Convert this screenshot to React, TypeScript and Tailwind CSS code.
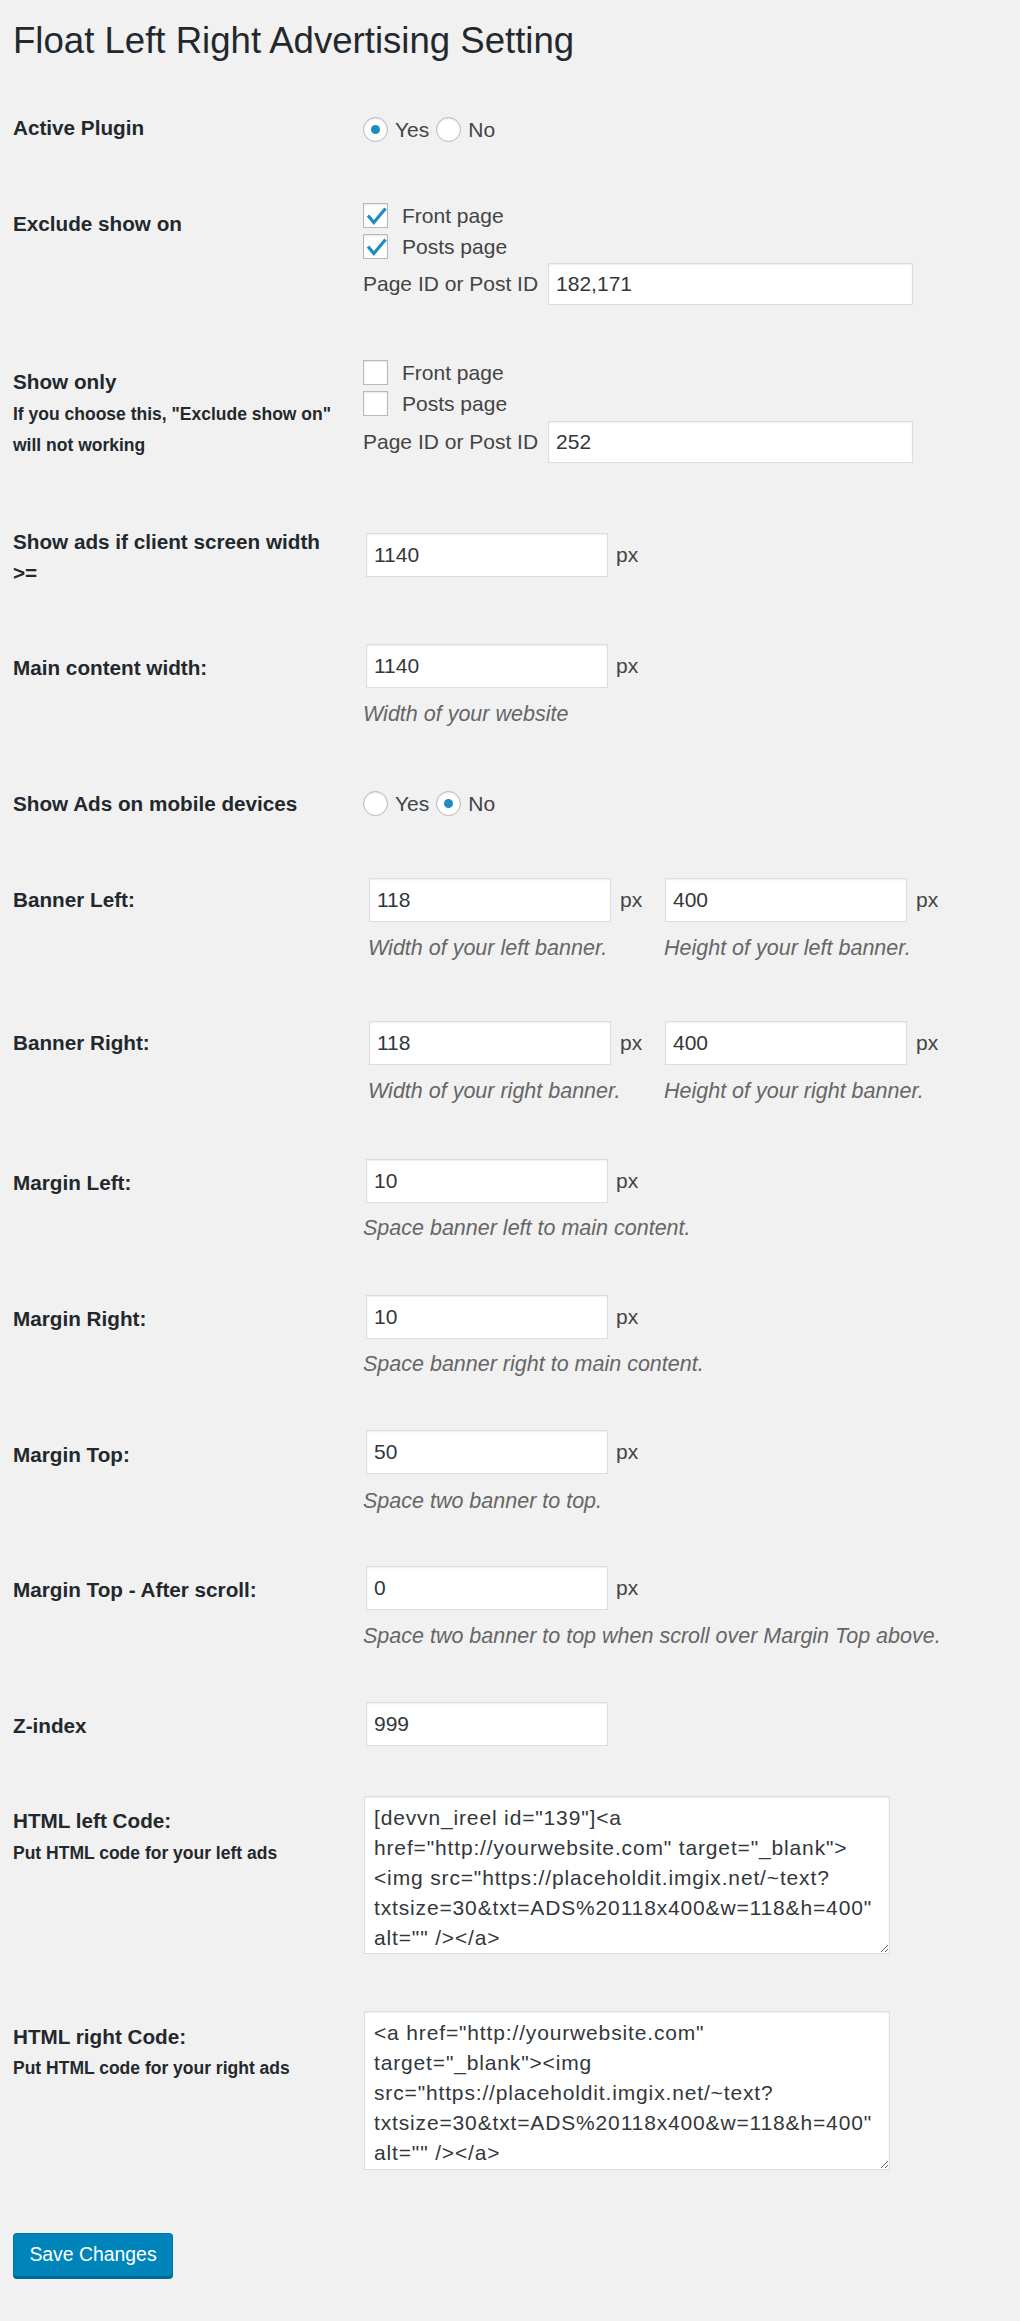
import React from "react";

const inputCls =
  "block h-[44px] w-[242px] border border-[#dddddd] bg-white px-[7px] text-[21px] text-[#32373c] shadow-[inset_0_1px_2px_rgba(0,0,0,0.07)] outline-none";

const wideInputCls =
  "block h-[42px] w-[365px] border border-[#dddddd] bg-white px-[7px] text-[21px] text-[#32373c] shadow-[inset_0_1px_2px_rgba(0,0,0,0.07)] outline-none";

const descCls = "text-[21.5px] italic leading-[31px] text-[#666666]";

function Row({
  h,
  lpt,
  label,
  sub,
  subMt,
  children,
}: {
  h: string;
  lpt: string;
  label: React.ReactNode;
  sub?: React.ReactNode;
  subMt?: string;
  children?: React.ReactNode;
}) {
  return (
    <div className={`flex ${h}`}>
      <div className={`w-[363px] shrink-0 pl-[13px] pr-[25px] ${lpt}`}>
        <div className="text-[20.7px] font-bold leading-[31px] text-[#23282d]">{label}</div>
        {sub ? (
          <div className={`${subMt ?? ""} text-[17.5px] font-bold leading-[31px] text-[#23282d]`}>{sub}</div>
        ) : null}
      </div>
      <div className="min-w-0 flex-1 pt-[22px]">{children}</div>
    </div>
  );
}

function Radio({ checked }: { checked?: boolean }) {
  return (
    <span className="flex h-[25px] w-[25px] shrink-0 items-center justify-center rounded-full border border-[#b4b9be] bg-white shadow-[inset_0_1px_2px_rgba(0,0,0,0.1)]">
      {checked ? <span className="h-[9px] w-[9px] rounded-full bg-[#1e8cbe]" /> : null}
    </span>
  );
}

function Checkbox({ checked }: { checked?: boolean }) {
  return (
    <span className="flex h-[25px] w-[25px] shrink-0 items-center justify-center border border-[#b4b9be] bg-white shadow-[inset_0_1px_2px_rgba(0,0,0,0.1)]">
      {checked ? (
        <svg width="25" height="25" viewBox="0 0 25 25" className="-m-px">
          <path d="M5 12.5 L10.8 19.5 L22.5 5.5" fill="none" stroke="#1e8cbe" strokeWidth="3.2" strokeLinejoin="miter" />
        </svg>
      ) : null}
    </span>
  );
}

function YesNo({ yes }: { yes: boolean }) {
  return (
    <div className="flex h-[31px] items-center text-[21px] text-[#444444]">
      <Radio checked={yes} />
      <span className="ml-[7px]">Yes</span>
      <span className="ml-[7px]">
        <Radio checked={!yes} />
      </span>
      <span className="ml-[7px]">No</span>
    </div>
  );
}

function CheckLine({ checked, text }: { checked?: boolean; text: string }) {
  return (
    <div className="flex h-[31px] items-center text-[21px] text-[#444444]">
      <Checkbox checked={checked} />
      <span className="ml-[14px]">{text}</span>
    </div>
  );
}

function PageIdLine({ value, mt }: { value: string; mt: string }) {
  return (
    <div className={`flex items-center ${mt}`}>
      <span className="text-[21px] text-[#444444]">Page ID or Post ID</span>
      <input className={`ml-[10px] ${wideInputCls}`} defaultValue={value} readOnly />
    </div>
  );
}

function PxInput({ value }: { value: string }) {
  return (
    <div className="ml-[3px] flex items-center">
      <input className={inputCls} defaultValue={value} readOnly />
      <span className="ml-[8px] text-[21px] text-[#444444]">px</span>
    </div>
  );
}

function BannerCol({ value, desc, w }: { value: string; desc: string; w: string }) {
  return (
    <div className={`${w} shrink-0`}>
      <div className="ml-[1px] flex items-center">
        <input className={inputCls} defaultValue={value} readOnly />
        <span className="ml-[9px] text-[21px] text-[#444444]">px</span>
      </div>
      <div className={`mt-[11px] ${descCls}`}>{desc}</div>
    </div>
  );
}

const textareaCls =
  "ml-[1px] block w-[526px] resize-y overflow-hidden whitespace-pre border border-[#dddddd] bg-white pl-[9px] pr-[6px] pt-[6px] text-[21px] tracking-[0.85px] leading-[30px] text-[#32373c] shadow-[inset_0_1px_2px_rgba(0,0,0,0.07)] outline-none";

const leftCode = `[devvn_ireel id="139"]<a
href="http://yourwebsite.com" target="_blank">
<img src="https://placeholdit.imgix.net/~text?
txtsize=30&txt=ADS%20118x400&w=118&h=400"
alt="" /></a>`;

const rightCode = `<a href="http://yourwebsite.com"
target="_blank"><img
src="https://placeholdit.imgix.net/~text?
txtsize=30&txt=ADS%20118x400&w=118&h=400"
alt="" /></a>`;

export default function App() {
  return (
    <div className="min-h-[2321px] w-full bg-[#f1f1f1] font-['Liberation_Sans',Arial,sans-serif] text-[#444444]">
      <div className="pl-[13px] pt-[19px]">
        <h1 className="h-[43px] text-[36.6px] font-normal leading-[43px] text-[#23282d]">
          Float Left Right Advertising Setting
        </h1>
      </div>

      <div className="mt-[30px]">
        <Row h="h-[86px]" lpt="pt-[20px]" label="Active Plugin">
          <YesNo yes={true} />
        </Row>

        <Row h="h-[157px]" lpt="pt-[30px]" label="Exclude show on">
          <CheckLine checked text="Front page" />
          <CheckLine checked text="Posts page" />
          <PageIdLine value="182,171" mt="mt-[1px]" />
        </Row>

        <Row
          h="h-[176px]"
          lpt="pt-[31px]"
          label="Show only"
          sub={<>If you choose this, &quot;Exclude show on&quot; will not working</>}
          subMt="mt-[2px]"
        >
          <CheckLine text="Front page" />
          <CheckLine text="Posts page" />
          <PageIdLine value="252" mt="mt-[2px]" />
        </Row>

        <Row h="h-[111px]" lpt="pt-[15px]" label="Show ads if client screen width >=">
          <PxInput value="1140" />
        </Row>

        <Row h="h-[144px]" lpt="pt-[30px]" label="Main content width:">
          <PxInput value="1140" />
          <div className={`mt-[11px] ${descCls}`}>Width of your website</div>
        </Row>

        <Row h="h-[90px]" lpt="pt-[22px]" label="Show Ads on mobile devices">
          <YesNo yes={false} />
        </Row>

        <Row h="h-[143px]" lpt="pt-[28px]" label="Banner Left:">
          <div className="ml-[5px] flex">
            <BannerCol w="w-[296px]" value="118" desc="Width of your left banner." />
            <BannerCol w="w-[300px]" value="400" desc="Height of your left banner." />
          </div>
        </Row>

        <Row h="h-[138px]" lpt="pt-[28px]" label="Banner Right:">
          <div className="ml-[5px] flex">
            <BannerCol w="w-[296px]" value="118" desc="Width of your right banner." />
            <BannerCol w="w-[300px]" value="400" desc="Height of your right banner." />
          </div>
        </Row>

        <Row h="h-[136px]" lpt="pt-[30px]" label="Margin Left:">
          <PxInput value="10" />
          <div className={`mt-[10px] ${descCls}`}>Space banner left to main content.</div>
        </Row>

        <Row h="h-[135px]" lpt="pt-[30px]" label="Margin Right:">
          <PxInput value="10" />
          <div className={`mt-[10px] ${descCls}`}>Space banner right to main content.</div>
        </Row>

        <Row h="h-[136px]" lpt="pt-[31px]" label="Margin Top:">
          <PxInput value="50" />
          <div className={`mt-[12px] ${descCls}`}>Space two banner to top.</div>
        </Row>

        <Row h="h-[136px]" lpt="pt-[30px]" label="Margin Top - After scroll:">
          <PxInput value="0" />
          <div className={`mt-[11px] ${descCls}`}>Space two banner to top when scroll over Margin Top above.</div>
        </Row>

        <Row h="h-[94px]" lpt="pt-[30px]" label="Z-index">
          <div className="ml-[3px]">
            <input className={inputCls} defaultValue="999" readOnly />
          </div>
        </Row>

        <Row
          h="h-[215px]"
          lpt="pt-[31px]"
          label="HTML left Code:"
          sub="Put HTML code for your left ads"
          subMt="mt-[2px]"
        >
          <textarea className={`h-[158px] ${textareaCls}`} defaultValue={leftCode} readOnly />
        </Row>

        <Row
          h="h-[215px]"
          lpt="pt-[32px]"
          label="HTML right Code:"
          sub="Put HTML code for your right ads"
          subMt="mt-[1px]"
        >
          <textarea className={`h-[159px] ${textareaCls}`} defaultValue={rightCode} readOnly />
        </Row>
      </div>

      <div className="mt-[29px] pl-[13px]">
        <button className="h-[44px] w-[160px] rounded-[4px] border border-[#0073aa] border-b-[#006799] bg-[#0085ba] text-[19.4px] text-white shadow-[0_2px_0_#006799]">
          Save Changes
        </button>
      </div>
    </div>
  );
}
